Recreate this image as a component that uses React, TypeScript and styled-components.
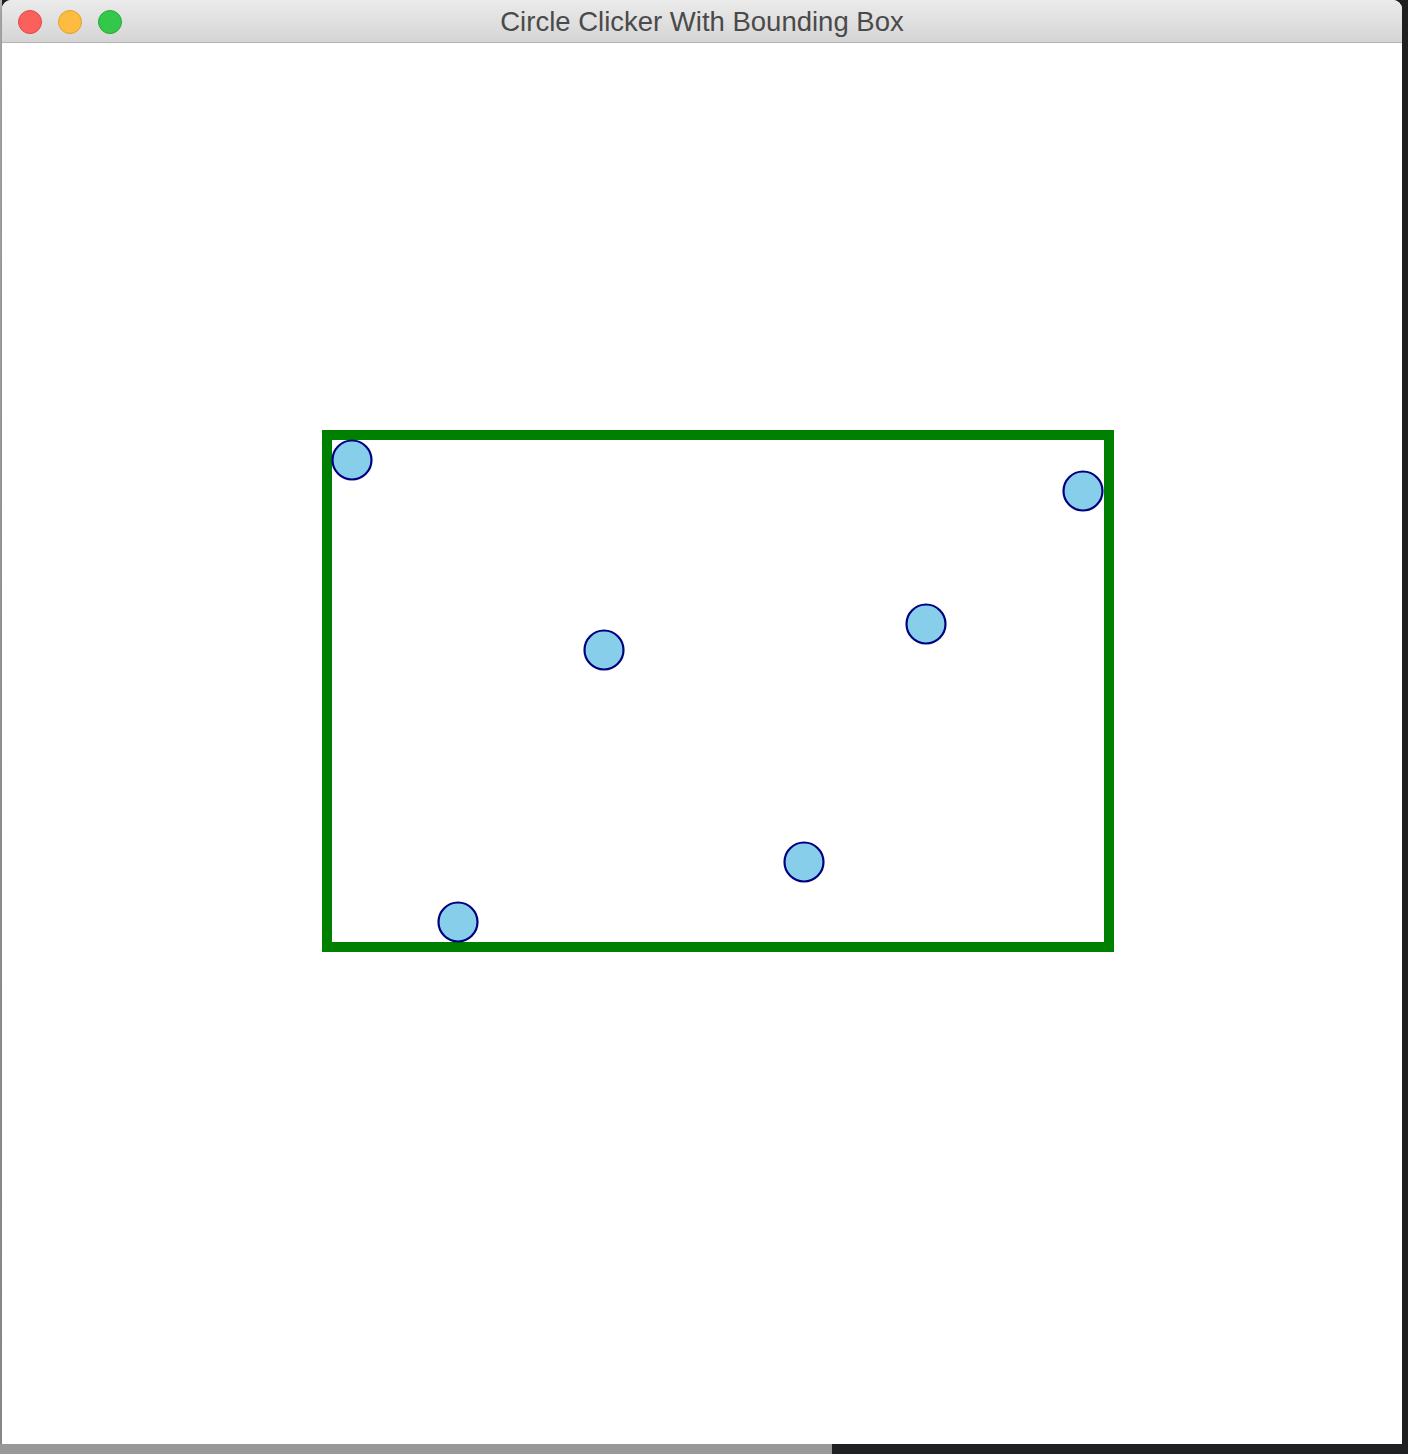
import { FC } from 'react';
import styled, { createGlobalStyle } from 'styled-components';

const GlobalStyle = createGlobalStyle`
  html, body {
    margin: 0;
    padding: 0;
    background: #1f2022;
  }
  body {
    font-family: 'Liberation Sans', Arial, sans-serif;
  }
`;

const Desktop = styled.div`
  display: flex;
  flex-direction: column;
  width: 1408px;
  height: 1454px;
  overflow: hidden;
  background: #1f2022;
`;

const TopRow = styled.div`
  display: flex;
  height: 1444px;
  flex-shrink: 0;
`;

const LeftEdge = styled.div`
  width: 2px;
  background: linear-gradient(#b8b8b8, #a0a0a0 60%, #9a9a9a);
`;

const RightEdge = styled.div`
  flex: 1;
  background: #1e1f21;
`;

const BottomStrip = styled.div`
  display: flex;
  height: 10px;
`;

const BottomPart = styled.div<{ $w?: number; $bg: string }>`
  width: ${({ $w }) => ($w ? `${$w}px` : 'auto')};
  flex: ${({ $w }) => ($w ? 'none' : 1)};
  background: ${({ $bg }) => $bg};
`;

const Window = styled.div`
  display: flex;
  flex-direction: column;
  width: 1400px;
  background: #fff;
  border-radius: 9px 9px 0 0;
  overflow: hidden;
  box-shadow: 0 2px 6px rgba(0, 0, 0, 0.35);
`;

const TitleBar = styled.div`
  position: relative;
  display: flex;
  flex-shrink: 0;
  align-items: center;
  justify-content: center;
  height: 42px;
  border-bottom: 1px solid #b4b4b4;
  background: linear-gradient(#ebebeb, #d5d5d5);
`;

const Lights = styled.div`
  position: absolute;
  left: 16px;
  top: 10px;
  display: flex;
  gap: 16px;
`;

const Light = styled.span<{ $color: string; $border: string }>`
  width: 24px;
  height: 24px;
  box-sizing: border-box;
  border-radius: 50%;
  background: ${({ $color }) => $color};
  border: 1px solid ${({ $border }) => $border};
`;

const Title = styled.div`
  font-size: 27.5px;
  color: #4a4a4a;
  margin-top: 2px;
`;

const Content = styled.div`
  flex: 1;
  background: #fff;

  svg {
    display: block;
  }
`;

const circles = [
  { x: 350, y: 417 },
  { x: 1081, y: 448 },
  { x: 602, y: 607 },
  { x: 924, y: 581 },
  { x: 802, y: 819 },
  { x: 456, y: 879 },
];

const Scene: FC = () => (
  <svg width="1400" height="1401" viewBox="0 0 1400 1401">
    <rect x="325" y="392" width="782" height="512" fill="none" stroke="#008000" strokeWidth="10" />
    {circles.map((c, i) => (
      <circle key={i} cx={c.x} cy={c.y} r="19.5" fill="#87ceeb" stroke="#000080" strokeWidth="2.2" />
    ))}
  </svg>
);

const App: FC = () => {
  return (
    <Desktop>
      <GlobalStyle />
      <TopRow>
        <LeftEdge />
        <Window>
          <TitleBar>
            <Lights>
              <Light $color="#fc605c" $border="#de4a44" />
              <Light $color="#fdbc40" $border="#dea034" />
              <Light $color="#34c84a" $border="#27aa35" />
            </Lights>
            <Title>Circle Clicker With Bounding Box</Title>
          </TitleBar>
          <Content>
            <Scene />
          </Content>
        </Window>
        <RightEdge />
      </TopRow>
      <BottomStrip>
        <BottomPart $w={832} $bg="#989898" />
        <BottomPart $bg="#1f2022" />
      </BottomStrip>
    </Desktop>
  );
};

export default App;
